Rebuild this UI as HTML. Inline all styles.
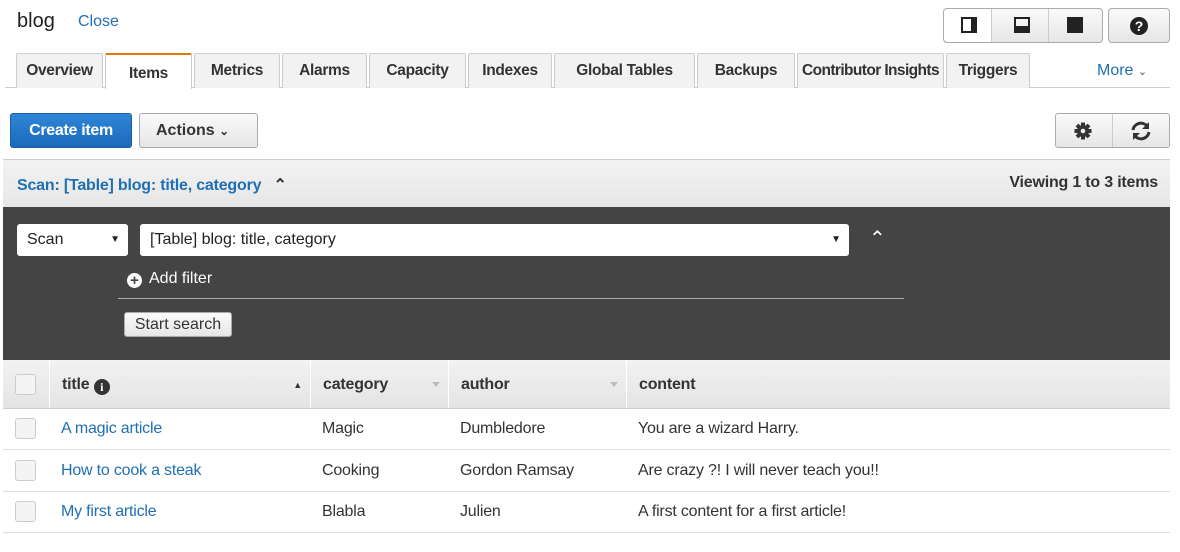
<!DOCTYPE html><html><head><style>
*{box-sizing:border-box;margin:0;padding:0}
body{width:1180px;height:552px;background:#fff;font-family:"Liberation Sans",sans-serif;position:relative;overflow:hidden;color:#333;white-space:nowrap}
.a{position:absolute}
.tab{position:absolute;top:53px;height:35px;background:#f2f2f2;border:1px solid #ccc;border-bottom:none;font-weight:bold;font-size:15.5px;letter-spacing:-0.3px;color:#333;text-align:center;line-height:33px;border-radius:2px 2px 0 0}
.btn{position:absolute;border:1px solid #aaa;border-radius:3px;background:linear-gradient(#fafafa,#e6e6e6)}
.cb{position:absolute;left:15px;width:21px;height:21px;border:1px solid #ccc;border-radius:3px;background:#f4f4f4}
.th{position:absolute;top:360px;height:48px;line-height:50px;font-weight:bold;font-size:16px;letter-spacing:-0.2px;border-left:1px solid #fff}
.td{position:absolute;font-size:16px;letter-spacing:-0.2px}
.ln{position:absolute;left:3px;width:1167px;height:1px;background:#ddd}
.sa{position:absolute;top:22px;width:0;height:0;border-left:4px solid transparent;border-right:4px solid transparent;border-top:5px solid #bbb}
</style></head><body>
<div class="a" style="left:17px;top:10px;font-size:20px;color:#222">blog</div>
<div class="a" style="left:78px;top:13px;font-size:16px;color:#1f6fb5">Close</div>
<div class="btn" style="left:943px;top:8px;width:160px;height:35px;border-radius:4px"></div>
<div class="a" style="left:944px;top:9px;width:48px;height:33px;background:#fff;border-radius:4px 0 0 4px"></div>
<div class="a" style="left:991px;top:9px;width:1px;height:33px;background:#ccc"></div>
<div class="a" style="left:1048px;top:9px;width:1px;height:33px;background:#ccc"></div>
<div class="a" style="left:961px;top:17px;width:16px;height:16px;border:2px solid #222;border-right-width:6px"></div>
<div class="a" style="left:1014px;top:17px;width:16px;height:16px;border:2px solid #222;border-bottom-width:7px"></div>
<div class="a" style="left:1067px;top:17px;width:16px;height:16px;background:#222"></div>
<div class="btn" style="left:1108px;top:8px;width:62px;height:35px;border-radius:4px"></div>
<div class="a" style="left:1130px;top:17px;width:18px;height:18px;border-radius:50%;background:#222;color:#fff;font-weight:bold;font-size:14px;text-align:center;line-height:18px">?</div>
<div class="a" style="left:5px;top:87px;width:1165px;height:1px;background:#ccc"></div>
<div class="tab" style="left:16px;width:87px">Overview</div>
<div class="tab" style="left:105px;width:87px;background:#fff;border-top:2px solid #e07b00;height:36px;line-height:37px">Items</div>
<div class="tab" style="left:194px;width:86px">Metrics</div>
<div class="tab" style="left:282px;width:85px">Alarms</div>
<div class="tab" style="left:369px;width:97px">Capacity</div>
<div class="tab" style="left:468px;width:84px">Indexes</div>
<div class="tab" style="left:554px;width:141px">Global Tables</div>
<div class="tab" style="left:697px;width:98px">Backups</div>
<div class="tab" style="left:797px;width:147px;letter-spacing:-0.6px">Contributor Insights</div>
<div class="tab" style="left:946px;width:84px">Triggers</div>
<div class="a" style="left:1097px;top:62px;font-size:16px;color:#1f6fb5">More <span style="font-size:11px;color:#555">&#8964;</span></div>
<div class="a" style="left:10px;top:113px;width:122px;height:35px;border-radius:3px;background:linear-gradient(#2f86d6,#1a69bd);border:1px solid #1a5fa8;color:#fff;font-weight:bold;font-size:16px;letter-spacing:-0.3px;text-align:center;line-height:33px">Create item</div>
<div class="btn" style="left:139px;top:113px;width:119px;height:35px;font-weight:bold;font-size:16px;line-height:33px;padding-left:16px;color:#333">Actions <span style="font-size:12px">&#8964;</span></div>
<div class="btn" style="left:1055px;top:113px;width:115px;height:35px"></div>
<div class="a" style="left:1112px;top:114px;width:1px;height:33px;background:#ccc"></div>
<svg class="a" style="left:1074px;top:122px" width="18" height="18" viewBox="0 0 18 18"><g fill="#333"><circle cx="9" cy="9" r="6"/><rect x="7" y="0.5" width="4" height="17"/><rect x="0.5" y="7" width="17" height="4"/><rect x="7" y="0.5" width="4" height="17" transform="rotate(45 9 9)"/><rect x="7" y="0.5" width="4" height="17" transform="rotate(-45 9 9)"/></g><circle cx="9" cy="9" r="2.3" fill="#eee"/></svg>
<svg class="a" style="left:1128px;top:120px" width="26" height="22" viewBox="0 0 26 22"><path d="M5 10a8 8 0 0 1 14-4" fill="none" stroke="#333" stroke-width="3"/><path d="M21 2v7h-7z" fill="#333"/><path d="M21 12a8 8 0 0 1-14 4" fill="none" stroke="#333" stroke-width="3"/><path d="M5 20v-7h7z" fill="#333"/></svg>
<div class="a" style="left:3px;top:159px;width:1167px;height:48px;background:linear-gradient(#f3f3f3,#e6e6e6);border-top:1px solid #ccc"></div>
<div class="a" style="left:17px;top:175px;font-size:16px;font-weight:bold;letter-spacing:-0.2px;color:#1f6fb5">Scan: [Table] blog: title, category <span style="color:#333;margin-left:8px">&#8963;</span></div>
<div class="a" style="right:22px;top:174px;font-size:16px;font-weight:bold;letter-spacing:-0.2px;color:#333">Viewing 1 to 3 items</div>
<div class="a" style="left:3px;top:207px;width:1167px;height:153px;background:#444"></div>
<div class="a" style="left:17px;top:224px;width:111px;height:32px;background:#fff;border-radius:3px;font-size:16px;line-height:32px;padding-left:10px;color:#222">Scan<span style="position:absolute;right:8px;font-size:10px">&#9660;</span></div>
<div class="a" style="left:140px;top:224px;width:709px;height:32px;background:#fff;border-radius:3px;font-size:16px;line-height:32px;padding-left:10px;color:#222">[Table] blog: title, category<span style="position:absolute;right:8px;font-size:10px">&#9660;</span></div>
<div class="a" style="left:869px;top:226px;font-size:20px;color:#fff">&#8963;</div>
<div class="a" style="left:127px;top:273px;width:15px;height:15px;border-radius:50%;background:#fff;color:#444;font-weight:bold;font-size:15px;text-align:center;line-height:15px">+</div>
<div class="a" style="left:149px;top:270px;font-size:16px;color:#fff">Add filter</div>
<div class="a" style="left:118px;top:298px;width:786px;height:1px;background:#aaa"></div>
<div class="btn" style="left:124px;top:312px;width:108px;height:25px;font-size:16px;line-height:23px;text-align:center;color:#333">Start search</div>
<div class="a" style="left:3px;top:360px;width:1167px;height:48px;background:linear-gradient(#f2f2f2,#e4e4e4)"></div>
<div class="cb" style="top:374px"></div>
<div class="th" style="left:49px;width:261px;padding-left:12px">title <span style="display:inline-block;width:16px;height:16px;border-radius:50%;background:#333;color:#fff;font-size:12px;line-height:16px;text-align:center;vertical-align:-2px;font-family:'Liberation Serif',serif">i</span><span style="position:absolute;right:8px;top:0;font-size:9px;color:#333">&#9650;</span></div>
<div class="th" style="left:310px;width:138px;padding-left:12px">category<span class="sa" style="right:8px"></span></div>
<div class="th" style="left:448px;width:178px;padding-left:12px">author<span class="sa" style="right:8px"></span></div>
<div class="th" style="left:626px;width:544px;padding-left:12px">content</div>
<div class="ln" style="top:408px;background:#ccc"></div>
<div class="cb" style="top:418px"></div>
<div class="td" style="left:61px;top:420px;color:#1f6fb5">A magic article</div><div class="td" style="left:322px;top:420px">Magic</div><div class="td" style="left:460px;top:420px">Dumbledore</div><div class="td" style="left:638px;top:420px">You are a wizard Harry.</div>
<div class="ln" style="top:449px"></div>
<div class="cb" style="top:460px"></div>
<div class="td" style="left:61px;top:462px;color:#1f6fb5">How to cook a steak</div><div class="td" style="left:322px;top:462px">Cooking</div><div class="td" style="left:460px;top:462px">Gordon Ramsay</div><div class="td" style="left:638px;top:462px">Are crazy ?! I will never teach you!!</div>
<div class="ln" style="top:491px"></div>
<div class="cb" style="top:501px"></div>
<div class="td" style="left:61px;top:503px;color:#1f6fb5">My first article</div><div class="td" style="left:322px;top:503px">Blabla</div><div class="td" style="left:460px;top:503px">Julien</div><div class="td" style="left:638px;top:503px">A first content for a first article!</div>
<div class="ln" style="top:532px"></div>
</body></html>
